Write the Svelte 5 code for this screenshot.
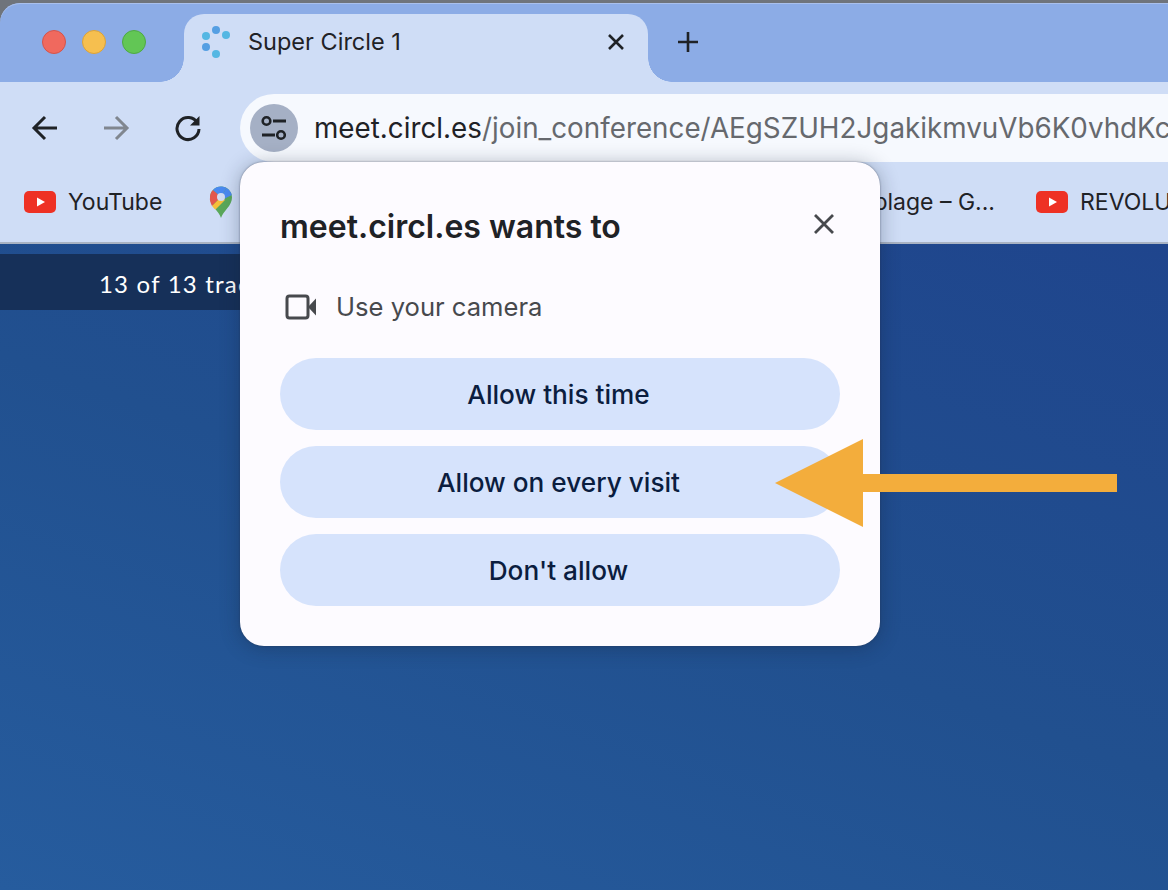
<script>
  const bookmarks = [
    { kind: 'yt', label: 'YouTube', cls: 'b1' },
    { kind: 'maps', label: 'Google Maps', cls: 'b2' },
    { kind: 'none', label: 'Assemblage – G...', cls: 'b3' },
    { kind: 'yt', label: 'REVOLUTION', cls: 'b4' }
  ];
  const actions = ['Allow this time', 'Allow on every visit', "Don't allow"];
</script>

<div class="window">
  <header class="tabstrip">
    <div class="lights">
      <span class="light red"></span>
      <span class="light yellow"></span>
      <span class="light green"></span>
    </div>
    <div class="tab">
      <svg class="favicon" width="32" height="34" viewBox="0 0 32 34">
        <circle cx="16" cy="5" r="4" fill="#559fe3" />
        <circle cx="26" cy="10" r="4" fill="#55b7e3" />
        <circle cx="6" cy="11" r="4" fill="#55b7e3" />
        <circle cx="6" cy="22" r="4" fill="#559fe3" />
        <circle cx="16" cy="29" r="4" fill="#55b7e3" />
      </svg>
      <span class="tab-title">Super Circle 1</span>
      <svg class="tab-close" width="18" height="18" viewBox="0 0 18 18">
        <path d="M2 2 16 16M16 2 2 16" stroke="#1f2226" stroke-width="2.6" fill="none" />
      </svg>
    </div>
    <svg class="newtab" width="22" height="22" viewBox="0 0 22 22">
      <path d="M11 1V21M1 11H21" stroke="#1f2226" stroke-width="2.6" fill="none" />
    </svg>
  </header>

  <div class="toolbar">
    <nav class="nav">
      <svg width="28" height="28" viewBox="0 0 28 28">
        <path d="M26 14H3M14 3 3 14 14 25" stroke="#1f2226" stroke-width="3" fill="none" />
      </svg>
      <svg width="28" height="28" viewBox="0 0 28 28">
        <path d="M2 14H25M14 3 25 14 14 25" stroke="#80868f" stroke-width="3" fill="none" />
      </svg>
      <svg width="28" height="28" viewBox="0 0 28 28">
        <path d="M23.5 9A11 11 0 1 0 25 15" stroke="#1f2226" stroke-width="3" fill="none" />
        <path d="M25.5 2V11.5H16Z" fill="#1f2226" />
      </svg>
    </nav>
    <div class="omnibox">
      <span class="tune">
        <svg width="28" height="26" viewBox="0 0 28 26">
          <circle cx="6.5" cy="6" r="3.8" fill="none" stroke="#1f2226" stroke-width="2.6" />
          <path d="M13 6H26M2 20H15" stroke="#1f2226" stroke-width="2.8" fill="none" />
          <circle cx="21" cy="20" r="3.8" fill="none" stroke="#1f2226" stroke-width="2.6" />
        </svg>
      </span>
      <span class="url"><span class="host">meet.circl.es</span>/join_conference/AEgSZUH2JgakikmvuVb6K0vhdKcXq</span>
    </div>
  </div>

  <div class="bookmarks">
    {#each bookmarks as b}
      <div class="bookmark {b.cls}">
        {#if b.kind === 'yt'}
          <svg width="32" height="22" viewBox="0 0 32 22">
            <rect width="32" height="22" rx="5" fill="#ee3124" />
            <path d="M13 6.5 21 11 13 15.5Z" fill="#fff" />
          </svg>
        {:else if b.kind === 'maps'}
          <svg width="24" height="32" viewBox="0 0 24 32">
            <path d="M12 32C10 25 1 20 1 11.5A11 11 0 0 1 23 11.5C23 20 14 25 12 32Z" fill="#5aa85a" />
            <path d="M4 4 12 11 3 20C1.500 17 .5 14 1 11.500 1 8.500 2 6 4 4Z" fill="#e2574c" />
            <path d="M3 20 12 11 16 14 6.500 23.500C5 22.500 4 21 3 20Z" fill="#f6bf3a" />
            <path d="M4 4C6 1.500 9 .5 12 .5 14 .5 16 1 17.500 2L12 11Z" fill="#4a8af0" />
            <path d="M17.500 2C20 3.500 22 6 22.800 9L15 13 12 11Z" fill="#4a8af0" />
            <circle cx="12" cy="11" r="4" fill="#cfdcf2" />
          </svg>
        {/if}
        <span class="bookmark-label">{b.label}</span>
      </div>
    {/each}
  </div>

  <main class="page">
    <div class="track-bar"><span>13 of 13 tracks</span></div>
    <p class="ghost">If prompted, please allow<br />you are using a</p>
  </main>

  <section class="popup">
    <div class="popup-head">
      <h2>meet.circl.es wants to</h2>
      <svg width="22" height="22" viewBox="0 0 22 22">
        <path d="M2 2 20 20M20 2 2 20" stroke="#47494d" stroke-width="2.8" fill="none" />
      </svg>
    </div>
    <div class="perm">
      <svg width="32" height="26" viewBox="0 0 32 26">
        <rect x="2" y="2" width="21" height="22" rx="2.500" fill="none" stroke="#47494d" stroke-width="3" />
        <path d="M23 13 31 4.500V21.500Z" fill="#47494d" />
      </svg>
      <span>Use your camera</span>
    </div>
    <div class="actions">
      {#each actions as a}
        <button>{a}</button>
      {/each}
    </div>
  </section>

  <svg class="arrow" width="344" height="90" viewBox="0 0 344 90">
    <path d="M0 44 88 0V35H342V53H88V88Z" fill="#f3ad3c" />
  </svg>
</div>

<style>
  :global(body) { margin: 0; }
  .window {
    position: relative;
    width: 1168px;
    height: 890px;
    overflow: hidden;
    background: #6f747b;
    padding-top: 3px;
    box-sizing: border-box;
    display: flex;
    flex-direction: column;
    font-family: Inter, "Liberation Sans", sans-serif;
    color: #1f2226;
  }
  .tabstrip {
    height: 79px;
    flex: none;
    background: #8cace6;
    border-radius: 20px 0 0 0;
    box-shadow: inset 0 1px 0 #a9c0ec;
    display: flex;
    align-items: flex-end;
    box-sizing: border-box;
  }
  .lights {
    display: flex;
    gap: 16px;
    padding: 0 0 28px 42px;
    width: 184px;
    box-sizing: border-box;
  }
  .light { width: 24px; height: 24px; border-radius: 50%; box-sizing: border-box; border: 1px solid; }
  .red { background: #f0695e; border-color: #d4544a; }
  .yellow { background: #f6bf4f; border-color: #dca238; }
  .green { background: #62c655; border-color: #4ea943; }
  .tab {
    position: relative;
    width: 464px;
    height: 68px;
    background: #cfddf6;
    border-radius: 20px 20px 0 0;
    display: flex;
    align-items: center;
    padding: 0 23px 13px 16px;
    box-sizing: border-box;
  }
  .tab::before, .tab::after {
    content: "";
    position: absolute;
    bottom: 0;
    width: 24px;
    height: 24px;
  }
  .tab::before { left: -24px; background: radial-gradient(circle at 0 0, transparent 23.5px, #cfddf6 24px); }
  .tab::after { right: -24px; background: radial-gradient(circle at 100% 0, transparent 23.5px, #cfddf6 24px); }
  .tab-title { font-size: 23.5px; margin-left: 16px; flex: 1; }
  .newtab { margin: 0 0 29px 29px; }
  .toolbar {
    height: 80px;
    flex: none;
    background: #cfddf6;
    display: flex;
    padding-top: 12px;
    box-sizing: border-box;
  }
  .nav {
    width: 240px;
    flex: none;
    display: flex;
    gap: 44px;
    padding: 20px 0 0 30px;
    box-sizing: border-box;
  }
  .nav svg { flex: none; }
  .nav svg:first-child { margin: 0 -1px 0 1px; }
  .omnibox {
    flex: none;
    width: 1000px;
    height: 68px;
    background: #f6f9fe;
    border-radius: 34px 0 0 34px;
    display: flex;
    align-items: center;
    padding-left: 10px;
    gap: 16px;
    overflow: hidden;
    box-sizing: border-box;
  }
  .tune {
    width: 48px;
    height: 48px;
    flex: none;
    border-radius: 50%;
    background: #a5b0c5;
    display: flex;
    align-items: center;
    justify-content: center;
  }
  .url { font-size: 27.8px; color: #66696e; white-space: nowrap; }
  .host { color: #1f2226; }
  .bookmarks {
    height: 80px;
    flex: none;
    background: #cfddf6;
    border-bottom: 2px solid #a9b3c3;
    display: flex;
    align-items: center;
    white-space: nowrap;
    overflow: hidden;
  }
  .bookmark { display: flex; align-items: center; gap: 12px; flex: none; box-sizing: border-box; font-size: 23px; }
  .bookmark svg { flex: none; }
  .b1 { width: 209px; padding-left: 24px; }
  .b2 { width: 240px; }
  .b3 { width: 587px; justify-content: flex-end; padding-right: 41px; }
  .b4 { width: 132px; }
  .page {
    flex: 1;
    position: relative;
    background: linear-gradient(200deg, #1f458d 0%, #21508f 50%, #265c9e 100%);
    padding-top: 10px;
    box-sizing: border-box;
  }
  .track-bar {
    width: 500px;
    height: 56px;
    background: #163059;
    color: #fff;
    font-family: Lato, sans-serif;
    font-size: 24px;
    letter-spacing: 1.2px;
    display: flex;
    align-items: center;
    padding: 2px 0 0 99px;
    box-sizing: border-box;
  }
  .ghost {
    margin: 143px 0 0 884px;
    font-family: Lato, sans-serif;
    font-size: 44px;
    line-height: 46px;
    font-style: italic;
    font-weight: 300;
    color: rgba(255, 255, 255, 0.022);
    white-space: nowrap;
  }
  .popup {
    position: absolute;
    left: 240px;
    top: 162px;
    width: 640px;
    height: 484px;
    background: #fdfbff;
    border-radius: 24px;
    box-shadow: 0 0 2px rgba(40, 50, 70, .6), 0 2px 20px rgba(20, 30, 50, .32);
    padding: 40px;
    box-sizing: border-box;
  }
  .popup-head {
    display: flex;
    justify-content: space-between;
    align-items: center;
    height: 48px;
    margin-bottom: 39px;
  }
  .popup-head svg { margin-right: 5px; margin-top: -4px; }
  h2 { margin: 0; font-size: 32px; font-weight: 600; color: #1f2226; }
  .perm {
    display: flex;
    align-items: center;
    gap: 19px;
    padding: 0 0 1px 5px;
    height: 36px;
    box-sizing: border-box;
    font-size: 25.6px;
    color: #47494d;
    margin-bottom: 33px;
  }
  .perm svg { margin-top: 1px; }
  .actions { display: flex; flex-direction: column; gap: 16px; }
  button {
    height: 72px;
    width: 100%;
    border: 0;
    border-radius: 36px;
    background: #d6e3fc;
    color: #0b1d3f;
    font-family: inherit;
    font-size: 26.2px;
    font-weight: 500;
    padding: 0 3px 0 0;
  }
  .arrow { position: absolute; left: 775px; top: 439px; }
</style>
